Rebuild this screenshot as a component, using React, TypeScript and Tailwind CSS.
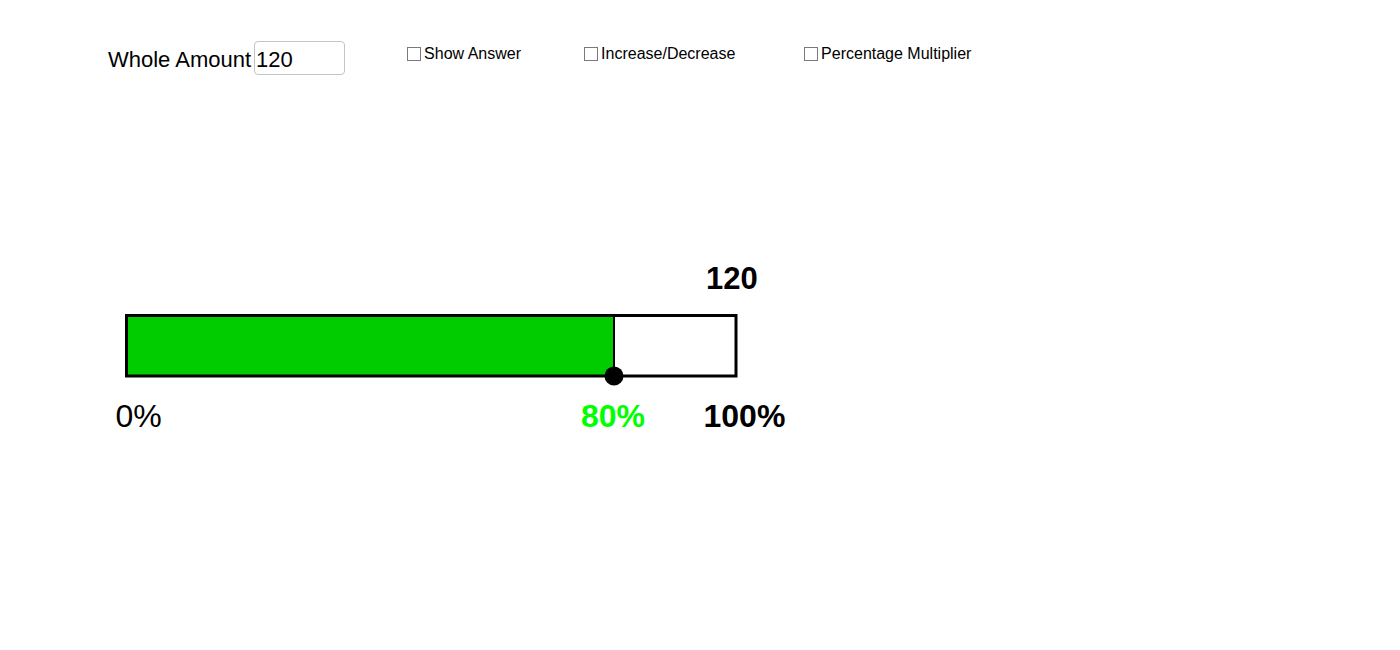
import { useState } from 'react';

function Check({ label, className }: { label: string; className?: string }) {
    const [on, setOn] = useState(false);
    return (
        <label className={`flex items-start cursor-pointer ${className ?? ''}`} onClick={() => setOn(!on)}>
            <span className="mt-[6px] w-[14px] h-[14px] border border-[#7a7a7a] bg-white flex items-center justify-center text-[10px] leading-none">
                {on ? '✓' : ''}
            </span>
            <span className="mt-[4.5px] ml-[3px] text-[16px] leading-[16px] text-black">{label}</span>
        </label>
    );
}

export default function App() {
    const [whole, setWhole] = useState('120');
    const pct = 80;

    return (
        <div className="w-[1400px] h-[650px] bg-white flex flex-col font-['Liberation_Sans',Arial,sans-serif] text-black overflow-hidden">
            {/* toolbar row */}
            <div className="h-[100px] flex items-start pl-[108px] pt-[41px]">
                <div className="flex items-start">
                    <span className="mt-[8px] text-[22px] leading-[22px]">Whole Amount</span>
                    <input
                        value={whole}
                        onChange={(e) => setWhole(e.target.value)}
                        className="ml-[3px] w-[91px] h-[34px] box-border border border-[#c4c4c4] rounded-[4px] pl-[1px] pt-[3px] pb-0 text-[22px] outline-none bg-white"
                    />
                </div>
                <Check label="Show Answer" className="ml-[62px] w-[177px]" />
                <Check label="Increase/Decrease" className="w-[220px]" />
                <Check label="Percentage Multiplier" />
            </div>

            {/* graphics view */}
            <div className="relative flex-1">
                <div className="absolute left-[706px] top-[163px] text-[31px] leading-[31px] font-bold">{whole}</div>

                <svg className="absolute left-[120px] top-[205px]" width="630" height="85" viewBox="0 0 630 85">
                    <rect x="8" y="12" width="486" height="58" fill="#00cc00" />
                    <rect x="6.5" y="10.5" width="609.5" height="60.5" fill="none" stroke="#000" strokeWidth="3" />
                    <line x1="494" y1="10" x2="494" y2="71" stroke="#000" strokeWidth="2" />
                    <circle cx="494" cy="71" r="9.5" fill="#000" />
                </svg>

                <div className="absolute left-[115.5px] top-[300px] text-[32px] leading-[32px]">0%</div>
                <div className="absolute left-[581px] top-[300px] text-[32px] leading-[32px] font-bold text-[#00ff00]">{pct}%</div>
                <div className="absolute left-[703.5px] top-[300px] text-[32px] leading-[32px] font-bold">100%</div>
            </div>
        </div>
    );
}
